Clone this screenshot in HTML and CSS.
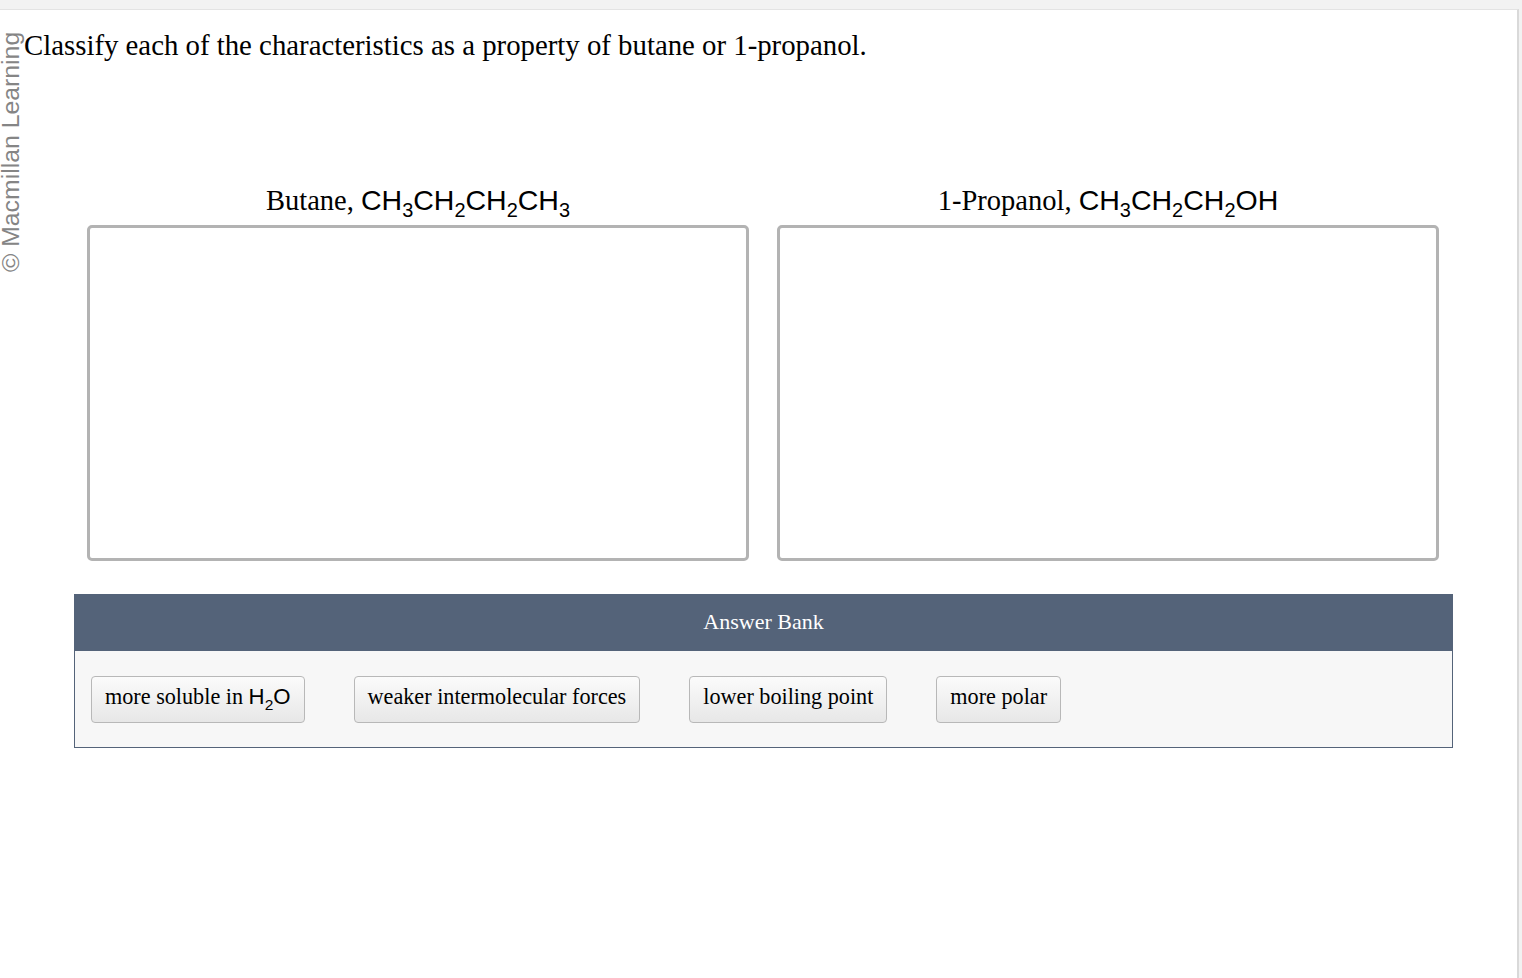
FILE: index.html
```html
<!DOCTYPE html>
<html lang="en">
<head>
    <meta charset="UTF-8">
    <meta name="viewport" content="width=device-width, initial-scale=1.0">
    <title>Classify butane or 1-propanol</title>
    <link rel="stylesheet" href="styles.css">
</head>
<body>

    <div class="page">
        <!-- copyright strip on the left edge -->
        <div class="watermark">© Macmillan Learning</div>

        <p class="question">Classify each of the characteristics as a property of butane or 1-propanol.</p>

        <div class="bins">
            <div class="bin">
                <h3 class="binTitle">Butane, <span class="formula">CH<sub>3</sub>CH<sub>2</sub>CH<sub>2</sub>CH<sub>3</sub></span></h3>
                <div class="dropZone"></div>
            </div>
            <div class="bin">
                <h3 class="binTitle">1-Propanol, <span class="formula">CH<sub>3</sub>CH<sub>2</sub>CH<sub>2</sub>OH</span></h3>
                <div class="dropZone"></div>
            </div>
        </div>

        <div class="answerBank">
            <div class="bankHeader">Answer Bank</div>
            <div class="bankItems">
                <button class="chip">more soluble in <span class="formula">H<sub>2</sub>O</span></button>
                <button class="chip">weaker intermolecular forces</button>
                <button class="chip">lower boiling point</button>
                <button class="chip">more polar</button>
            </div>
        </div>
    </div>

</body>
</html>
```

FILE: styles.css
```css
body{
    margin: 0;
    padding: 0;
    background: #f2f2f2;
    font-family: "Liberation Serif", "Times New Roman", serif;
    color: #000;
}

.page {
    position: relative;
    margin-top: 9px;
    width: 1519px;
    height: 969px;
    background: #fff;
    border-top: 1px solid #e3e3e3;
    border-right: 2px solid #d9d9d9;
    box-sizing: border-box;
}

.watermark {
    position: absolute;
    left: -1px;
    top: 262px;
    transform-origin: 0 0;
    transform: rotate(-90deg);
    font-family: "Liberation Sans", Arial, sans-serif;
    font-size: 24.8px;
    line-height: 24px;
    color: #858585;
    white-space: nowrap;
}

.question {
    margin: 0;
    padding: 19px 0 0 24px;
    font-size: 28.8px;
    line-height: 32px;
}

.bins {
    display: flex;
    gap: 28px;
    padding: 0 0 0 87px;
    margin-top: 123px;
}

.bin {
    width: 662px;
}

.binTitle {
    margin: 0 0 8px 0;
    text-align: center;
    font-weight: normal;
    font-size: 28.5px;
    line-height: 32px;
}

.formula {
    font-family: "Liberation Sans", Arial, sans-serif;
}

.formula sub {
    font-size: 0.7em;
    line-height: 0;
    vertical-align: -0.36em;
}

.dropZone {
    height: 336px;
    border: 3px solid #b3b3b3;
    border-radius: 5px;
    box-sizing: border-box;
}

.answerBank {
    margin: 33px 0 0 74px;
    width: 1379px;
    border: 1px solid #546379;
    box-sizing: border-box;
}

.bankHeader {
    height: 56px;
    line-height: 54px;
    background: #546379;
    color: #fff;
    text-align: center;
    font-size: 22px;
}

.bankItems {
    display: flex;
    gap: 49px;
    padding: 25px 16px 24px 16px;
    background: #f7f7f7;
}

.chip {
    height: 47px;
    padding: 0 13px 6px 13px;
    border: 1px solid #b8b8b8;
    border-radius: 4px;
    background: linear-gradient(#fbfbfb, #e7e7e7);
    font-family: "Liberation Serif", "Times New Roman", serif;
    font-size: 22.2px;
    color: #000;
}
```
